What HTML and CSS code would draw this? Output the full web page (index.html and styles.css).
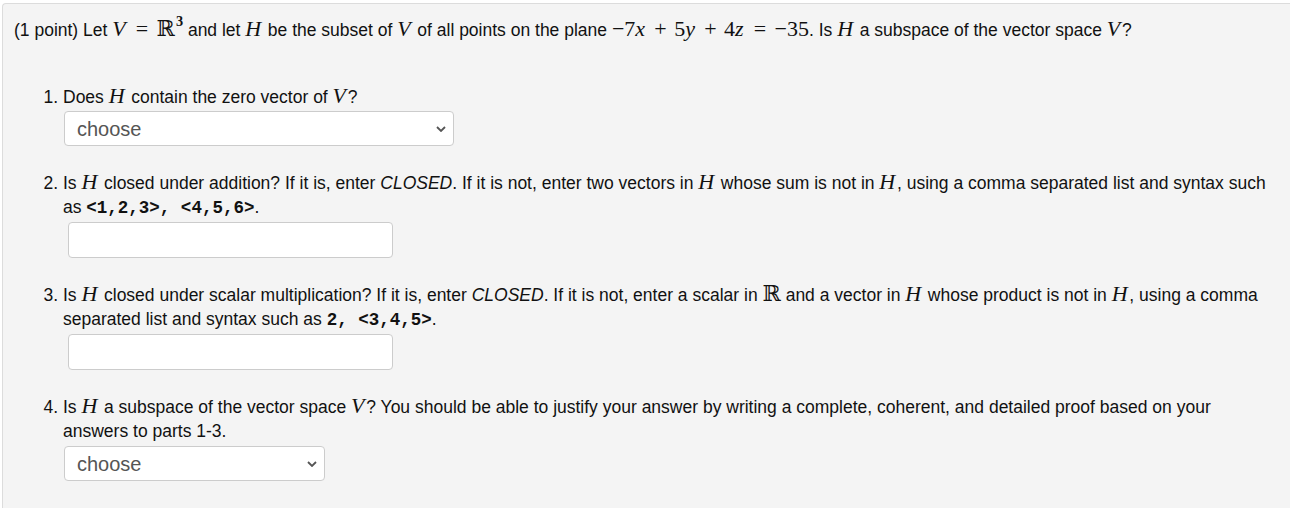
FILE: index.html
```html
<html>
  <head>
    <title>Subspace problem</title>
    <link rel="stylesheet" href="styles.css">
  </head>
  <body>
    <div class="problem">
      <p class="intro">(1 point) Let <span class="m"><i>V</i><span class="rel">=</span><span class="bb">ℝ</span><sup>3</sup></span> and let <i class="m">H</i> be the subset of <i class="m">V</i> of all points on the plane <span class="m">−7<i>x</i><span class="bin">+</span>5<i>y</i><span class="bin">+</span>4<i>z</i><span class="rel">=</span>−35</span>. Is <i class="m">H</i> a subspace of the vector space <i class="m">V</i>?</p>

      <ol class="parts">
        <li>
          <p>Does <i class="m">H</i> contain the zero vector of <i class="m">V</i>?</p>
          <span class="pick wide">
            <select><option>choose</option><option>Yes</option><option>No</option></select>
            <svg class="chev" viewBox="0 0 10 6"><path d="M1 1l4 4 4-4" fill="none" stroke="#555" stroke-width="1.8"/></svg>
          </span>
        </li>
        <li>
          <p>Is <i class="m">H</i> closed under addition? If it is, enter <em>CLOSED</em>. If it is not, enter two vectors in <i class="m">H</i> whose sum is not in <i class="m">H</i>, using a comma separated list and syntax such as <code>&lt;1,2,3&gt;, &lt;4,5,6&gt;</code>.</p>
          <input class="answer" type="text">
        </li>
        <li>
          <p>Is <i class="m">H</i> closed under scalar multiplication? If it is, enter <em>CLOSED</em>. If it is not, enter a scalar in <span class="m bb">ℝ</span> and a vector in <i class="m">H</i> whose product is not in <i class="m">H</i>, using a comma separated list and syntax such as <code>2, &lt;3,4,5&gt;</code>.</p>
          <input class="answer" type="text">
        </li>
        <li>
          <p>Is <i class="m">H</i> a subspace of the vector space <i class="m">V</i>? You should be able to justify your answer by writing a complete, coherent, and detailed proof based on your answers to parts 1-3.</p>
          <span class="pick narrow">
            <select><option>choose</option><option>Yes</option><option>No</option></select>
            <svg class="chev" viewBox="0 0 10 6"><path d="M1 1l4 4 4-4" fill="none" stroke="#555" stroke-width="1.8"/></svg>
          </span>
        </li>
      </ol>
    </div>
  </body>
</html>
```

FILE: styles.css
```css
body { margin: 0; background: #fff; font-family: "Liberation Sans", Arial, sans-serif; font-size: 17.5px; color: #111; }
.problem {
  margin: 3px 0 0 2px;
  padding: 14px 12px 0 11px;
  background-color: #f4f4f4;
  border: 1px solid #dcdcdc;
  border-right: none;
  border-bottom: none;
  border-radius: 4px 0 0 0;
}
p { margin: 0; line-height: 24px; }
.m { font-family: "Liberation Serif", "Times New Roman", serif; font-size: 22px; line-height: 1; }
i.m, .m i { font-style: italic; padding-right: 0.08em; }
.m .rel { padding: 0 0.38em; font-style: normal; }
.m .bin { padding: 0 0.34em; font-style: normal; }
.bb { font-family: "DejaVu Serif", serif; font-style: normal; }
.m sup { font-size: 0.65em; font-weight: bold; line-height: 0; vertical-align: 0.7em; margin-left: 1px; }
em { font-style: italic; }
code {
  font-family: "Liberation Mono", "Courier New", monospace;
  font-weight: bold;
  font-size: 17.5px;
  line-height: 1;
  white-space: pre;
}
.parts {
  margin: 43px 0 0 0;
  padding: 0 0 3px 49px;
}
.parts li { margin-bottom: 25px; }
.parts li:last-child { margin-bottom: 24px; }
.pick { position: relative; display: block; margin: 3px 0 0 1px; }
.pick.wide { margin-top: 2px; }
.pick select {
  appearance: none;
  -webkit-appearance: none;
  display: block;
  height: 35px;
  padding: 0 30px 0 12px;
  font-family: "Liberation Sans", Arial, sans-serif;
  font-size: 20px;
  color: #555;
  background: #fff;
  border: 1px solid #ccc;
  border-radius: 4px;
}
.wide select { width: 390px; }
.narrow select { width: 261px; }
.chev { position: absolute; top: 15px; width: 10px; height: 6px; }
.wide .chev { left: 372px; }
.narrow .chev { left: 243px; }
.answer {
  display: block;
  margin: 3px 0 0 5px;
  width: 325px;
  height: 36px;
  box-sizing: border-box;
  background: #fff;
  border: 1px solid #ccc;
  border-radius: 4px;
}
```
